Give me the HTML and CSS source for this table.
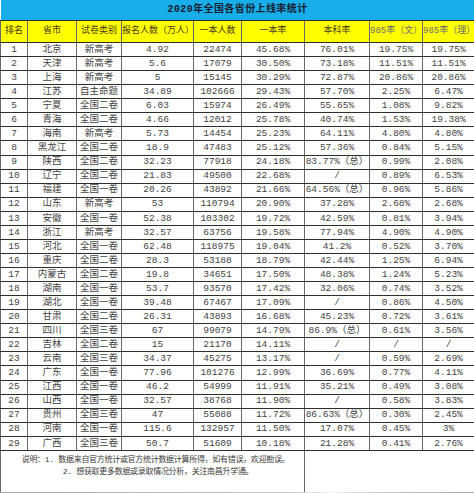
FILE: index.html
```html
<!DOCTYPE html>
<html lang="zh">
<head>
<meta charset="utf-8">
<title>2020年全国各省份上线率统计</title>
<link rel="stylesheet" href="styles.css">
</head>
<body>
<div class="sheet">
<table class="grid">
<colgroup>
<col class="c1"><col class="c2"><col class="c3"><col class="c4"><col class="c5"><col class="c6"><col class="c7"><col class="c8"><col class="c9">
</colgroup>
<thead>
<tr class="title-row"><td colspan="9">2020年全国各省份上线率统计</td></tr>
<tr class="head-row">
<td>排名</td><td>省市</td><td>试卷类别</td><td>报名人数（万人）</td><td>一本人数</td><td>一本率</td><td>本科率</td><td class="soft">985率（文）</td><td class="soft">985率（理）</td>
</tr>
</thead>
<tbody>
<tr><td>1</td><td>北京</td><td>新高考</td><td>4.92</td><td>22474</td><td>45.68%</td><td>76.01%</td><td>19.75%</td><td>19.75%</td></tr>
<tr><td>2</td><td>天津</td><td>新高考</td><td>5.6</td><td>17079</td><td>30.50%</td><td>73.18%</td><td>11.51%</td><td>11.51%</td></tr>
<tr><td>3</td><td>上海</td><td>新高考</td><td>5</td><td>15145</td><td>30.29%</td><td>72.87%</td><td>20.86%</td><td>20.86%</td></tr>
<tr><td>4</td><td>江苏</td><td>自主命题</td><td>34.89</td><td>102666</td><td>29.43%</td><td>57.70%</td><td>2.25%</td><td>6.47%</td></tr>
<tr><td>5</td><td>宁夏</td><td>全国二卷</td><td>6.03</td><td>15974</td><td>26.49%</td><td>55.65%</td><td>1.08%</td><td>9.82%</td></tr>
<tr><td>6</td><td>青海</td><td>全国二卷</td><td>4.66</td><td>12012</td><td>25.78%</td><td>40.74%</td><td>1.53%</td><td>19.38%</td></tr>
<tr><td>7</td><td>海南</td><td>新高考</td><td>5.73</td><td>14454</td><td>25.23%</td><td>64.11%</td><td>4.80%</td><td>4.80%</td></tr>
<tr><td>8</td><td>黑龙江</td><td>全国二卷</td><td>18.9</td><td>47483</td><td>25.12%</td><td>57.36%</td><td>0.84%</td><td>5.15%</td></tr>
<tr><td>9</td><td>陕西</td><td>全国二卷</td><td>32.23</td><td>77918</td><td>24.18%</td><td>83.77%（总）</td><td>0.99%</td><td>2.08%</td></tr>
<tr><td>10</td><td>辽宁</td><td>全国二卷</td><td>21.83</td><td>49500</td><td>22.68%</td><td>/</td><td>0.89%</td><td>6.53%</td></tr>
<tr><td>11</td><td>福建</td><td>全国一卷</td><td>20.26</td><td>43892</td><td>21.66%</td><td>64.56%（总）</td><td>0.96%</td><td>5.86%</td></tr>
<tr><td>12</td><td>山东</td><td>新高考</td><td>53</td><td>110794</td><td>20.90%</td><td>37.28%</td><td>2.68%</td><td>2.68%</td></tr>
<tr><td>13</td><td>安徽</td><td>全国一卷</td><td>52.38</td><td>103302</td><td>19.72%</td><td>42.59%</td><td>0.81%</td><td>3.94%</td></tr>
<tr><td>14</td><td>浙江</td><td>新高考</td><td>32.57</td><td>63756</td><td>19.58%</td><td>77.94%</td><td>4.90%</td><td>4.90%</td></tr>
<tr><td>15</td><td>河北</td><td>全国一卷</td><td>62.48</td><td>118975</td><td>19.04%</td><td>41.2%</td><td>0.52%</td><td>3.70%</td></tr>
<tr><td>16</td><td>重庆</td><td>全国二卷</td><td>28.3</td><td>53188</td><td>18.79%</td><td>42.44%</td><td>1.25%</td><td>6.94%</td></tr>
<tr><td>17</td><td>内蒙古</td><td>全国二卷</td><td>19.8</td><td>34651</td><td>17.50%</td><td>48.38%</td><td>1.24%</td><td>5.23%</td></tr>
<tr><td>18</td><td>湖南</td><td>全国一卷</td><td>53.7</td><td>93570</td><td>17.42%</td><td>32.06%</td><td>0.74%</td><td>3.52%</td></tr>
<tr><td>19</td><td>湖北</td><td>全国一卷</td><td>39.48</td><td>67467</td><td>17.09%</td><td>/</td><td>0.86%</td><td>4.50%</td></tr>
<tr><td>20</td><td>甘肃</td><td>全国二卷</td><td>26.31</td><td>43893</td><td>16.68%</td><td>45.23%</td><td>0.72%</td><td>3.61%</td></tr>
<tr><td>21</td><td>四川</td><td>全国三卷</td><td>67</td><td>99079</td><td>14.79%</td><td>86.9%（总）</td><td>0.61%</td><td>3.56%</td></tr>
<tr><td>22</td><td>吉林</td><td>全国二卷</td><td>15</td><td>21170</td><td>14.11%</td><td>/</td><td>/</td><td>/</td></tr>
<tr><td>23</td><td>云南</td><td>全国三卷</td><td>34.37</td><td>45275</td><td>13.17%</td><td>/</td><td>0.59%</td><td>2.69%</td></tr>
<tr><td>24</td><td>广东</td><td>全国一卷</td><td>77.96</td><td>101276</td><td>12.99%</td><td>36.69%</td><td>0.77%</td><td>4.11%</td></tr>
<tr><td>25</td><td>江西</td><td>全国一卷</td><td>46.2</td><td>54999</td><td>11.91%</td><td>35.21%</td><td>0.49%</td><td>3.08%</td></tr>
<tr><td>26</td><td>山西</td><td>全国一卷</td><td>32.57</td><td>38768</td><td>11.90%</td><td>/</td><td>0.58%</td><td>3.83%</td></tr>
<tr><td>27</td><td>贵州</td><td>全国三卷</td><td>47</td><td>55088</td><td>11.72%</td><td>86.63%（总）</td><td>0.30%</td><td>2.45%</td></tr>
<tr><td>28</td><td>河南</td><td>全国一卷</td><td>115.6</td><td>132957</td><td>11.50%</td><td>17.07%</td><td>0.45%</td><td>3%</td></tr>
<tr><td>29</td><td>广西</td><td>全国三卷</td><td>50.7</td><td>51609</td><td>10.18%</td><td>21.28%</td><td>0.41%</td><td>2.76%</td></tr>
</tbody>
<tfoot>
<tr class="note-row">
<td colspan="6" class="note"><p class="note-line">说明：1. 数据来自官方统计或官方统计数据计算所得，如有错误，欢迎勘误。</p><p class="note-line indent">2. 想获取更多数据或录取情况分析，关注南昌升学通。</p></td>
<td colspan="3"></td>
</tr>
</tfoot>
</table>
<div class="edge"></div>
</div>
</body>
</html>
```
FILE: styles.css
```css
html, body {
  margin: 0;
  padding: 0;
  background: #ffffff;
}
.sheet {
  width: 474px;
  height: 493px;
  overflow: hidden;
}
.grid {
  width: 474px;
  table-layout: fixed;
  border-collapse: collapse;
  font-family: "Liberation Mono", "Noto Sans CJK SC", monospace;
  font-size: 9.5px;
  line-height: 1;
  color: #444444;
}
.c1 { width: 27px; }
.c2 { width: 49px; }
.c3 { width: 45px; }
.c4 { width: 72px; }
.c5 { width: 48px; }
.c6 { width: 63px; }
.c7 { width: 65px; }
.c8 { width: 53px; }
.c9 { width: 52px; }
.grid td {
  border-top: 1px solid #2e2e2e;
  border-bottom: 1px solid #2e2e2e;
  border-left: 1px solid #6a6a6a;
  border-right: 1px solid #6a6a6a;
  padding: 0;
  text-align: center;
  vertical-align: middle;
  white-space: nowrap;
  overflow: hidden;
}
.grid tbody tr {
  height: 14.07px;
}
.title-row td {
  height: 20px;
  background: #17aeea;
  color: #1a2030;
  font-weight: bold;
  font-size: 10px;
  letter-spacing: 0.4px;
  border-top: none;
  border-left: none;
  border-right: none;
}
.head-row td {
  height: 21px;
  background: #ffff00;
  color: #4a3a1a;
  font-size: 9px;
}
.head-row td.soft {
  color: #6a6a7a;
}
.note-row td {
  height: 41px;
  vertical-align: top;
  border-bottom: none;
}
.note {
  text-align: left;
  font-size: 8px;
  letter-spacing: -0.3px;
  color: #3a3a3a;
}
.note-line {
  margin: 0;
  height: 12px;
  line-height: 12px;
  padding-left: 6px;
}
.note-line:first-child {
  margin-top: 3px;
}
.note-line.indent {
  padding-left: 11px;
}
.edge {
  height: 3px;
  background: linear-gradient(to right, #a9a9a9 0%, #c4c4c4 60%, #f2f2f2 70%, #c4c4c4 82%, #a9a9a9 100%);
}
```
